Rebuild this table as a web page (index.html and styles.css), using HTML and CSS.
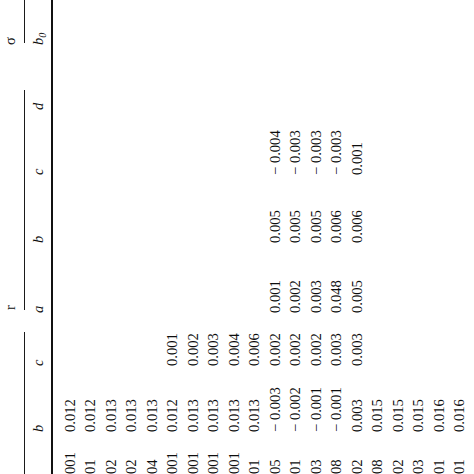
FILE: index.html
```html
<!DOCTYPE html>
<html>
<head>
<meta charset="utf-8">
<link rel="stylesheet" href="styles.css">
</head>
<body>
<div class="page">
  <div class="sheet">
    <div class="table">
      <div class="grp g1"></div>
      <div class="grp g2">r</div>
      <div class="grp g3">σ</div>

      <div class="hd"></div>
      <div class="hd">b</div>
      <div class="hd">c</div>
      <div class="hd">a</div>
      <div class="hd">b</div>
      <div class="hd">c</div>
      <div class="hd">d</div>
      <div class="hd">b<sub>0</sub></div>

      <div class="rule"></div>

      <div class="c">0.001</div><div class="c">0.012</div><div class="c"></div><div class="c"></div><div class="c"></div><div class="c"></div><div class="c"></div><div class="c"></div>
      <div class="c">0.01</div><div class="c">0.012</div><div class="c"></div><div class="c"></div><div class="c"></div><div class="c"></div><div class="c"></div><div class="c"></div>
      <div class="c">0.02</div><div class="c">0.013</div><div class="c"></div><div class="c"></div><div class="c"></div><div class="c"></div><div class="c"></div><div class="c"></div>
      <div class="c">0.02</div><div class="c">0.013</div><div class="c"></div><div class="c"></div><div class="c"></div><div class="c"></div><div class="c"></div><div class="c"></div>
      <div class="c">0.04</div><div class="c">0.013</div><div class="c"></div><div class="c"></div><div class="c"></div><div class="c"></div><div class="c"></div><div class="c"></div>
      <div class="c">0.001</div><div class="c">0.012</div><div class="c">0.001</div><div class="c"></div><div class="c"></div><div class="c"></div><div class="c"></div><div class="c"></div>
      <div class="c">0.001</div><div class="c">0.013</div><div class="c">0.002</div><div class="c"></div><div class="c"></div><div class="c"></div><div class="c"></div><div class="c"></div>
      <div class="c">0.001</div><div class="c">0.013</div><div class="c">0.003</div><div class="c"></div><div class="c"></div><div class="c"></div><div class="c"></div><div class="c"></div>
      <div class="c">0.001</div><div class="c">0.013</div><div class="c">0.004</div><div class="c"></div><div class="c"></div><div class="c"></div><div class="c"></div><div class="c"></div>
      <div class="c">0.01</div><div class="c">0.013</div><div class="c">0.006</div><div class="c"></div><div class="c"></div><div class="c"></div><div class="c"></div><div class="c"></div>
      <div class="c">0.05</div><div class="c">− 0.003</div><div class="c">0.002</div><div class="c">0.001</div><div class="c">0.005</div><div class="c">− 0.004</div><div class="c"></div><div class="c"></div>
      <div class="c">0.01</div><div class="c">− 0.002</div><div class="c">0.002</div><div class="c">0.002</div><div class="c">0.005</div><div class="c">− 0.003</div><div class="c"></div><div class="c"></div>
      <div class="c">0.03</div><div class="c">− 0.001</div><div class="c">0.002</div><div class="c">0.003</div><div class="c">0.005</div><div class="c">− 0.003</div><div class="c"></div><div class="c"></div>
      <div class="c">0.08</div><div class="c">− 0.001</div><div class="c">0.003</div><div class="c">0.048</div><div class="c">0.006</div><div class="c">− 0.003</div><div class="c"></div><div class="c"></div>
      <div class="c">0.02</div><div class="c">0.003</div><div class="c">0.003</div><div class="c">0.005</div><div class="c">0.006</div><div class="c">0.001</div><div class="c"></div><div class="c"></div>
      <div class="c">0.08</div><div class="c">0.015</div><div class="c"></div><div class="c"></div><div class="c"></div><div class="c"></div><div class="c"></div><div class="c"></div>
      <div class="c">0.02</div><div class="c">0.015</div><div class="c"></div><div class="c"></div><div class="c"></div><div class="c"></div><div class="c"></div><div class="c"></div>
      <div class="c">0.03</div><div class="c">0.015</div><div class="c"></div><div class="c"></div><div class="c"></div><div class="c"></div><div class="c"></div><div class="c"></div>
      <div class="c">0.01</div><div class="c">0.016</div><div class="c"></div><div class="c"></div><div class="c"></div><div class="c"></div><div class="c"></div><div class="c"></div>
      <div class="c">0.01</div><div class="c">0.016</div><div class="c"></div><div class="c"></div><div class="c"></div><div class="c"></div><div class="c"></div><div class="c"></div>
    </div>
  </div>
</div>
</body>
</html>
```

FILE: styles.css
```css
html, body {
  margin: 0;
  padding: 0;
  background: #ffffff;
}

.page {
  width: 474px;
  height: 474px;
  overflow: hidden;
}

.sheet {
  width: 474px;
  height: 474px;
  overflow: hidden;
  transform: rotate(-90deg);
  font-family: "Liberation Serif", "Times New Roman", serif;
  font-size: 14.6px;
  color: #0d0d0d;
}

.table {
  display: grid;
  grid-template-columns: 53px 66px 53px 70px 68px 65px 65px 60px;
  width: 500px;
  margin-left: -11px;
}

.grp {
  height: 20px;
  line-height: 20px;
  padding-bottom: 4px;
  border-bottom: 1px solid #1a1a1a;
}

.g1 {
  grid-column: 1 / 4;
  margin-right: 19px;
}

.g2 {
  grid-column: 4 / 8;
  margin-left: 3px;
  margin-right: 45px;
}

.g3 {
  grid-column: 8 / 9;
  margin-left: 2px;
  text-indent: -2px;
}

.hd {
  height: 20px;
  line-height: 20px;
  padding-top: 3.4px;
  font-style: italic;
}

.hd sub {
  font-size: 70%;
  line-height: 0;
  vertical-align: -3px;
}

.rule {
  grid-column: 1 / -1;
  height: 2px;
  background: #111;
  margin-top: 2.6px;
  margin-bottom: 6.9px;
}

.c {
  height: 20.5px;
  line-height: 20.5px;
  white-space: nowrap;
}
```
